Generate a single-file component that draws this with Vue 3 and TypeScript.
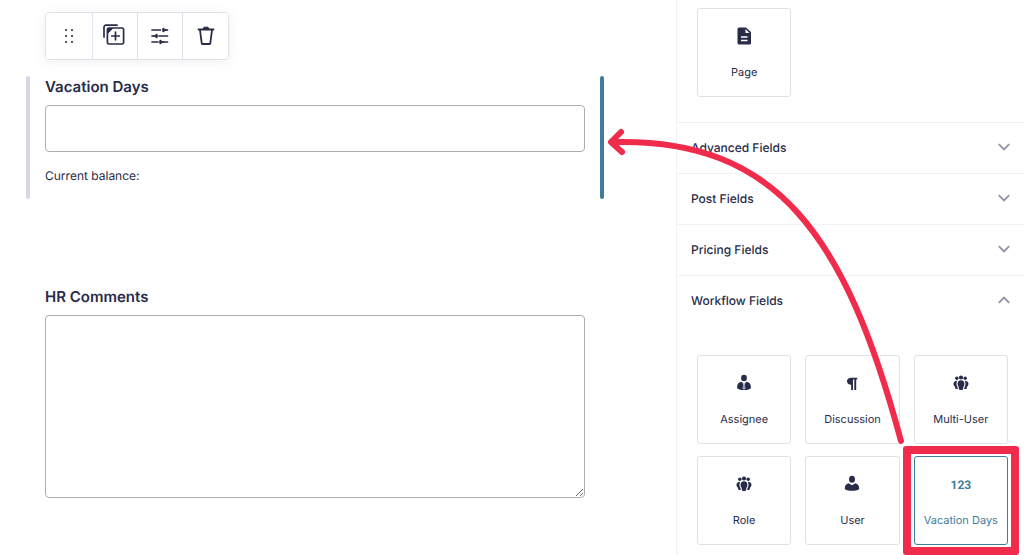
<script setup lang="ts">
import { ref } from 'vue'

type IconName = 'assignee' | 'discussion' | 'group' | 'user' | 'number'

interface FieldType {
  label: string
  icon: IconName
  active?: boolean
}

const balance = ref('')
const comments = ref('')
const closedGroups: string[] = ['Advanced Fields', 'Post Fields', 'Pricing Fields']
const workflowFields: FieldType[] = [
  { label: 'Assignee', icon: 'assignee' },
  { label: 'Discussion', icon: 'discussion' },
  { label: 'Multi-User', icon: 'group' },
  { label: 'Role', icon: 'group' },
  { label: 'User', icon: 'user' },
  { label: 'Vacation Days', icon: 'number', active: true },
]
</script>

<template>
  <div class="editor">
    <main class="canvas">
      <div class="toolbar" role="toolbar" aria-label="Field actions">
        <button type="button" aria-label="Move">
          <svg width="24" height="24" viewBox="0 0 24 24" fill="currentColor">
            <circle cx="9" cy="6" r="1.1" /><circle cx="15" cy="6" r="1.1" />
            <circle cx="9" cy="12" r="1.1" /><circle cx="15" cy="12" r="1.1" />
            <circle cx="9" cy="18" r="1.1" /><circle cx="15" cy="18" r="1.1" />
          </svg>
        </button>
        <button type="button" aria-label="Duplicate">
          <svg width="24" height="24" viewBox="1 1 24 24" fill="none" stroke="currentColor" stroke-width="1.7" stroke-linecap="round" stroke-linejoin="round">
            <path d="M2 14V4.200A2 2 0 0 1 4 2.200H15" />
            <rect x="5.400" y="5" width="16.200" height="16" rx="1.600" />
            <path d="M13.500 9.200v7.600M9.700 13h7.600" />
            <path d="M6 5.500h4.600L6 10z" fill="currentColor" stroke-width="1" />
          </svg>
        </button>
        <button type="button" aria-label="Settings">
          <svg width="24" height="24" viewBox="0 0 24 24" fill="none" stroke="currentColor" stroke-width="1.700" stroke-linecap="round">
            <path d="M4 6h8.500M17.500 6h2M4 12h2M11 12h8.500M4 18h6M14.500 18h5" />
            <path d="M15.500 5v2M8.500 11v2M12.500 17v2" stroke-width="2.400" />
            <path d="M15.500 6h3M5.500 12h3M12.500 18h3" />
          </svg>
        </button>
        <button type="button" aria-label="Delete">
          <svg width="24" height="24" viewBox="0 0 24 24" fill="none" stroke="currentColor" stroke-width="1.800" stroke-linecap="round" stroke-linejoin="round">
            <path d="M4.500 5.500h15" />
            <path d="M9 5.200l1-2h4l1 2z" fill="currentColor" stroke-width="1" />
            <path d="M6 6l1.700 13.200a1 1 0 0 0 1 .8h6.600a1 1 0 0 0 1-.8L18 6" />
          </svg>
        </button>
      </div>

      <section class="field selected">
        <label for="vacation">Vacation Days</label>
        <input id="vacation" v-model="balance" type="text" />
        <p>Current balance:</p>
      </section>

      <section class="field comments">
        <label for="comments">HR Comments</label>
        <textarea id="comments" v-model="comments"></textarea>
      </section>
    </main>

    <aside class="sidebar">
      <div class="cards standard">
        <button type="button" class="card">
          <svg class="icon" width="20" height="20" viewBox="0 0 20 20">
            <path fill="currentColor" d="M5 1.500h7L17 6v11a1.500 1.500 0 0 1-1.500 1.500H5A1.500 1.500 0 0 1 3.500 17V3A1.500 1.500 0 0 1 5 1.500z" />
            <path d="M11.500 3v4h4" fill="#fff" />
            <path d="M7 11h6.500M7 14.500h6.500" stroke="#fff" stroke-width="1.300" />
          </svg>
          <span>Page</span>
        </button>
      </div>

      <button v-for="group in closedGroups" :key="group" type="button" class="group" aria-expanded="false">
        <span>{{ group }}</span>
        <svg width="12" height="8" viewBox="0 0 12 8" fill="none" stroke="currentColor" stroke-width="1.800"><path d="M.8 1.200L6 6.400l5.200-5.200" /></svg>
      </button>
      <button type="button" class="group" aria-expanded="true">
        <span>Workflow Fields</span>
        <svg width="12" height="8" viewBox="0 0 12 8" fill="none" stroke="currentColor" stroke-width="1.800"><path d="M.8 6.800L6 1.600l5.200 5.200" /></svg>
      </button>

      <div class="cards workflow">
        <button v-for="field in workflowFields" :key="field.label" type="button" class="card" :class="{ active: field.active }">
          <b v-if="field.icon === 'number'" class="icon number">123</b>
          <svg v-else class="icon" width="20" height="20" viewBox="0 0 20 20" fill="currentColor">
            <template v-if="field.icon === 'assignee'">
              <ellipse cx="10" cy="5" rx="2.900" ry="3.300" />
              <path d="M7 8.800l3 1.600 3-1.600c2.500.6 3.900 2.500 3.900 5.600 0 1.800-3.600 2.600-6.900 2.600s-6.900-.8-6.900-2.600c0-3.100 1.400-5 3.900-5.600z" />
              <path d="M8.600 10l1.400.6 1.400-.6-.6 1.500.6 4-1.400 1-1.400-1 .6-4z" fill="#fff" />
              <path d="M9.700 11.300h.6l.3 3.900-.6.500-.6-.5z" />
            </template>
            <path v-else-if="field.icon === 'discussion'" d="M15.200 6.500h-1v10.500h-1.900V6.500h-1.300v10.500H9.100v-5.200C6.500 11.700 5 10.300 5 8.300 5 6.100 6.700 4.800 9.200 4.800h6z" />
            <template v-else-if="field.icon === 'group'">
              <circle cx="10" cy="4.500" r="2.100" />
              <circle cx="5.800" cy="5.300" r="1.700" /><circle cx="14.200" cy="5.300" r="1.700" />
              <path d="M10 7.200c2.300 0 3.400 1.300 3.400 3.500 0 1.600-.6 2.400-1 3.200l-.4 2.300a1 1 0 0 1-1 .8H9a1 1 0 0 1-1-.8l-.4-2.300c-.4-.8-1-1.600-1-3.200 0-2.200 1.100-3.500 3.400-3.500z" />
              <path d="M6.200 7.700c-.9 1.800-1 4 0 5.800l.7 2.600H5.200a.8.800 0 0 1-.8-.6l-.6-2c-2-1.900-2-5.500 2.400-5.800zM13.800 7.700c.9 1.800 1 4 0 5.800l-.7 2.600h1.700a.8.800 0 0 0 .8-.6l.6-2c2-1.900 2-5.500-2.400-5.800z" />
            </template>
            <template v-else>
              <ellipse cx="10" cy="5.200" rx="3" ry="3.500" />
              <path d="M6.600 9.200l3.400 2 3.400-2c2.400.6 3.800 2.300 3.800 5.300 0 1.600-3.600 2.300-7.200 2.300s-7.200-.7-7.200-2.300c0-3 1.400-4.700 3.800-5.300z" />
            </template>
          </svg>
          <span>{{ field.label }}</span>
        </button>
      </div>

      <svg class="arrow" width="320" height="330" viewBox="0 0 320 330" fill="none" stroke="#f12b4b" stroke-width="6" stroke-linecap="round" stroke-linejoin="round" aria-hidden="true">
        <path d="M10 22C173 18 242 116 297 321" />
        <path d="M17 12L7 22l11 10" />
      </svg>
    </aside>
  </div>
</template>

<style>
body {
  margin: 0;
  background: #fff;
}
</style>

<style scoped>
.editor {
  display: flex;
  min-height: 100vh;
  overflow: hidden;
  color: #292c48;
  font-family: Inter, "Liberation Sans", sans-serif;
  text-rendering: geometricPrecision;
}
.editor * {
  box-sizing: border-box;
}
button {
  margin: 0;
  padding: 0;
  color: inherit;
  background: #fff;
  font-family: inherit;
  text-rendering: inherit;
}
.canvas {
  flex: 1;
  min-width: 0;
  padding: 12px 72px 0 26px;
}
.toolbar {
  display: inline-flex;
  margin-left: 19px;
  border: 1px solid #dfe1eb;
  border-radius: 4px;
  box-shadow: 0 2px 12px rgba(58, 58, 87, 0.08);
  overflow: hidden;
  vertical-align: top;
}
.toolbar button {
  display: flex;
  align-items: center;
  justify-content: center;
  width: 46px;
  height: 46px;
  border: 0;
}
.toolbar button + button {
  width: 45px;
  border-left: 1px solid #dfe1eb;
}
.toolbar button:last-child {
  width: 46px;
}
.field {
  padding: 0 19px;
}
.field label {
  display: block;
  padding-top: 1px;
  font-size: 15px;
  font-weight: 600;
  line-height: 20px;
}
.field input,
.field textarea {
  display: block;
  width: 100%;
  margin: 8px 0 0;
  border: 1px solid #abadb5;
  border-radius: 4px;
  background: #fff;
  font: inherit;
}
.field input {
  height: 47px;
  padding: 0 12px;
}
.field textarea {
  height: 183px;
  padding: 12px;
  resize: both;
}
.field p {
  margin: 14px 0 0;
  font-size: 12px;
  line-height: 20px;
}
.selected {
  position: relative;
  height: 123px;
  margin-top: 16px;
}
.selected::before,
.selected::after {
  position: absolute;
  top: 0;
  bottom: 0;
  left: 0;
  width: 4px;
  border-radius: 2px;
  background: #d7d8e5;
  content: "";
}
.selected::after {
  right: 0;
  left: auto;
  background: #3e7d9b;
}
.comments {
  margin-top: 87px;
}
.sidebar {
  position: relative;
  flex: 0 0 348px;
  border-left: 1px solid #f0f1f5;
}
.cards {
  display: grid;
  grid-template-columns: repeat(3, 1fr);
  gap: 12px 14px;
  padding: 0 16px 0 20px;
}
.standard {
  padding-top: 8px;
  padding-bottom: 25px;
}
.workflow {
  padding-top: 29px;
  padding-bottom: 10px;
}
.card {
  position: relative;
  display: flex;
  flex-direction: column;
  align-items: center;
  height: 89px;
  padding-top: 17px;
  border: 1px solid #e0e1e8;
  border-radius: 3px;
  font-size: 11px;
  line-height: 16px;
  white-space: nowrap;
}
.card .icon {
  height: 20px;
  margin-bottom: 18px;
}
.card .number {
  font-family: Roboto, sans-serif;
  font-size: 12px;
  font-weight: 700;
  line-height: 22px;
}
.card.active {
  border-color: #3e7d9b;
  color: #3e7d9b;
}
.card.active::after {
  position: absolute;
  inset: -11px -12px;
  border: 8px solid #f12b4b;
  border-radius: 3px;
  content: "";
}
.group {
  display: flex;
  align-items: center;
  justify-content: space-between;
  width: 100%;
  height: 51px;
  padding: 0 14px 2px;
  border: 0;
  border-top: 1px solid #f0f1f5;
  font-size: 12px;
  font-weight: 500;
}
.group svg {
  color: #8f92a8;
}
.arrow {
  position: absolute;
  top: 120px;
  right: 100px;
  pointer-events: none;
}
</style>
